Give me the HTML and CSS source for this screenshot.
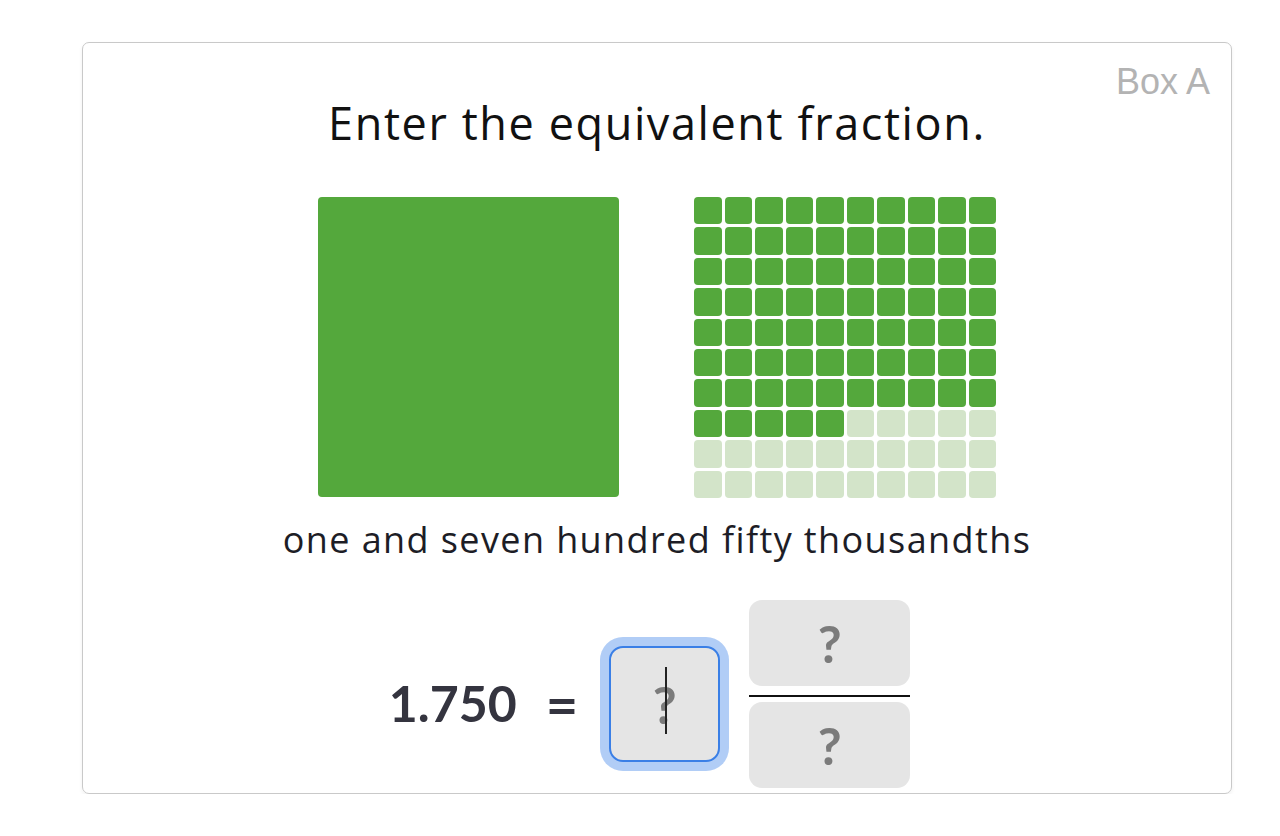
FILE: index.html
```html
<!DOCTYPE html>
<html lang="en">
<head>
<meta charset="utf-8">
<title>Equivalent fraction</title>
<link rel="stylesheet" href="styles.css">
</head>
<body>
<div class="page">
  <section class="card">
    <div class="box-label">Box A</div>
    <h1 class="title">Enter the equivalent fraction.</h1>
    <div class="models">
      <div class="whole"></div>
      <div class="hundred-grid" id="grid"></div>
    </div>
    <p class="words">one and seven hundred fifty thousandths</p>
    <div class="equation">
      <span class="decimal">1.750</span>
      <span class="equals">=</span>
      <div class="whole-input focused"><span class="q">?</span><span class="caret"></span></div>
      <div class="fraction">
        <div class="frac-box"><span class="q">?</span></div>
        <div class="frac-line"></div>
        <div class="frac-box"><span class="q">?</span></div>
      </div>
    </div>
  </section>
</div>
<script>
  var g = document.getElementById('grid');
  for (var i = 0; i < 100; i++) {
    var c = document.createElement('div');
    c.className = i < 75 ? 'cell on' : 'cell';
    g.appendChild(c);
  }
</script>
</body>
</html>
```

FILE: styles.css
```css
html, body {
  margin: 0;
  padding: 0;
  background: #ffffff;
}

.page {
  padding: 42px 48px 0 82px;
}

.card {
  position: relative;
  box-sizing: border-box;
  width: 1150px;
  height: 752px;
  border: 1px solid #c9c9c9;
  border-radius: 7px;
  box-shadow: 0 2px 4px rgba(0, 0, 0, 0.06);
  display: flex;
  flex-direction: column;
  align-items: center;
  padding-top: 52px;
  font-family: "Open Sans", "Lato", sans-serif;
}

.box-label {
  position: absolute;
  top: 18px;
  right: 21px;
  font-family: "Liberation Sans", Arial, sans-serif;
  font-size: 36px;
  color: #b3b3b3;
}

.title {
  margin: 0;
  font-size: 45px;
  font-weight: 500;
  letter-spacing: 1.6px;
  line-height: 56px;
  color: #111111;
}

.models {
  display: flex;
  align-items: flex-start;
  gap: 75px;
  margin-top: 46px;
}

.whole {
  width: 301px;
  height: 300px;
  background: #54a83c;
  border-radius: 4px;
}

.hundred-grid {
  width: 302px;
  height: 301px;
  display: grid;
  grid-template-columns: repeat(10, 1fr);
  grid-template-rows: repeat(10, 1fr);
  gap: 3px;
}

.cell {
  background: #d3e4c9;
  border-radius: 4px;
}

.cell.on {
  background: #54a83c;
}

.words {
  margin: 20px 0 0;
  font-size: 36px;
  font-weight: 500;
  letter-spacing: 1.4px;
  line-height: 44px;
  color: #1d1d26;
}

.equation {
  display: flex;
  align-items: center;
  margin-top: 38px;
  margin-right: 15px;
  font-family: "Lato", sans-serif;
}

.decimal {
  font-size: 50px;
  font-weight: 700;
  color: #34343f;
  padding-top: 18px;
}

.equals {
  font-size: 56px;
  font-weight: 700;
  color: #34343f;
  margin-left: 29px;
  margin-right: 31px;
  padding-top: 18px;
}

.q {
  font-size: 52px;
  font-weight: 700;
  color: #7b7b7b;
}

.whole-input {
  position: relative;
  box-sizing: border-box;
  width: 111px;
  height: 116px;
  background: #e5e5e5;
  border: 2px solid #3a7fe6;
  border-radius: 14px;
  box-shadow: 0 0 0 9px #b1cdf6;
  display: flex;
  align-items: center;
  justify-content: center;
  margin-top: 19px;
}

.caret {
  position: absolute;
  left: 54px;
  top: 19px;
  width: 2px;
  height: 67px;
  background: #222222;
}

.fraction {
  display: flex;
  flex-direction: column;
  margin-left: 29px;
  width: 161px;
}

.frac-box {
  height: 86px;
  background: #e5e5e5;
  border-radius: 13px;
  display: flex;
  align-items: center;
  justify-content: center;
}

.frac-line {
  height: 2px;
  background: #111111;
  margin: 9px 0 5px;
}
```
